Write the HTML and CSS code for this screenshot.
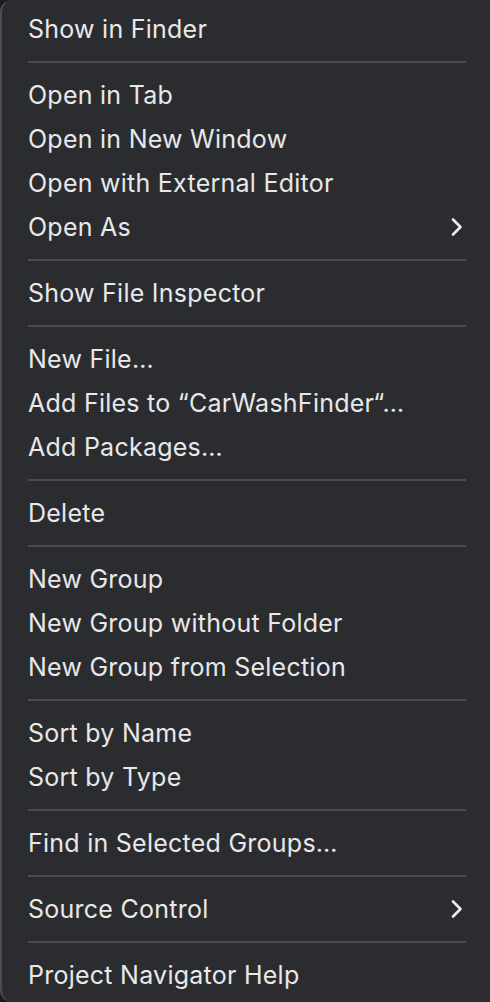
FILE: index.html
```html
<!DOCTYPE html>
<html>
<head>
<meta charset="utf-8">
<link rel="stylesheet" href="styles.css">
</head>
<body>
<div class="menu">
  <div class="pad-top"></div>
  <div class="item">Show in Finder</div>
  <div class="sep"></div>
  <div class="item">Open in Tab</div>
  <div class="item">Open in New Window</div>
  <div class="item">Open with External Editor</div>
  <div class="item sub">Open As<svg class="chev" width="14" height="20" viewBox="0 0 14 20"><path d="M3 2.5 L10.5 10 L3 17.5" fill="none" stroke="#ececec" stroke-width="2.6" stroke-linecap="round" stroke-linejoin="round"/></svg></div>
  <div class="sep"></div>
  <div class="item">Show File Inspector</div>
  <div class="sep"></div>
  <div class="item">New File…</div>
  <div class="item">Add Files to “CarWashFinder“…</div>
  <div class="item">Add Packages…</div>
  <div class="sep"></div>
  <div class="item">Delete</div>
  <div class="sep"></div>
  <div class="item">New Group</div>
  <div class="item">New Group without Folder</div>
  <div class="item">New Group from Selection</div>
  <div class="sep"></div>
  <div class="item">Sort by Name</div>
  <div class="item">Sort by Type</div>
  <div class="sep"></div>
  <div class="item">Find in Selected Groups…</div>
  <div class="sep"></div>
  <div class="item sub">Source Control<svg class="chev" width="14" height="20" viewBox="0 0 14 20"><path d="M3 2.5 L10.5 10 L3 17.5" fill="none" stroke="#ececec" stroke-width="2.6" stroke-linecap="round" stroke-linejoin="round"/></svg></div>
  <div class="sep"></div>
  <div class="item">Project Navigator Help</div>
</div>
</body>
</html>
```
FILE: styles.css
```css
html, body {
  margin: 0;
  padding: 0;
  background: #1c1c1e;
  overflow: hidden;
}
.menu {
  width: 500px;
  height: 1002px;
  box-sizing: border-box;
  background: #2b2c30;
  border-left: 2px solid #4c4d51;
  border-radius: 12px 0 0 12px;
  font-family: Inter, "Noto Sans", sans-serif;
  font-size: 25px;
  letter-spacing: 0.25px;
  color: #e8e8e8;
  display: flex;
  flex-direction: column;
}
.pad-top {
  height: 7px;
  flex: none;
}
.item {
  height: 44px;
  flex: none;
  display: flex;
  align-items: center;
  padding-left: 26px;
  padding-bottom: 1px;
  position: relative;
  width: 488px;
  box-sizing: border-box;
}
.chev {
  position: absolute;
  left: 448px;
  top: 12px;
}
.sep {
  height: 22px;
  flex: none;
  position: relative;
}
.sep::after {
  content: "";
  position: absolute;
  left: 26px;
  width: 438px;
  top: 10px;
  height: 2px;
  background: #4c4d51;
}
```
